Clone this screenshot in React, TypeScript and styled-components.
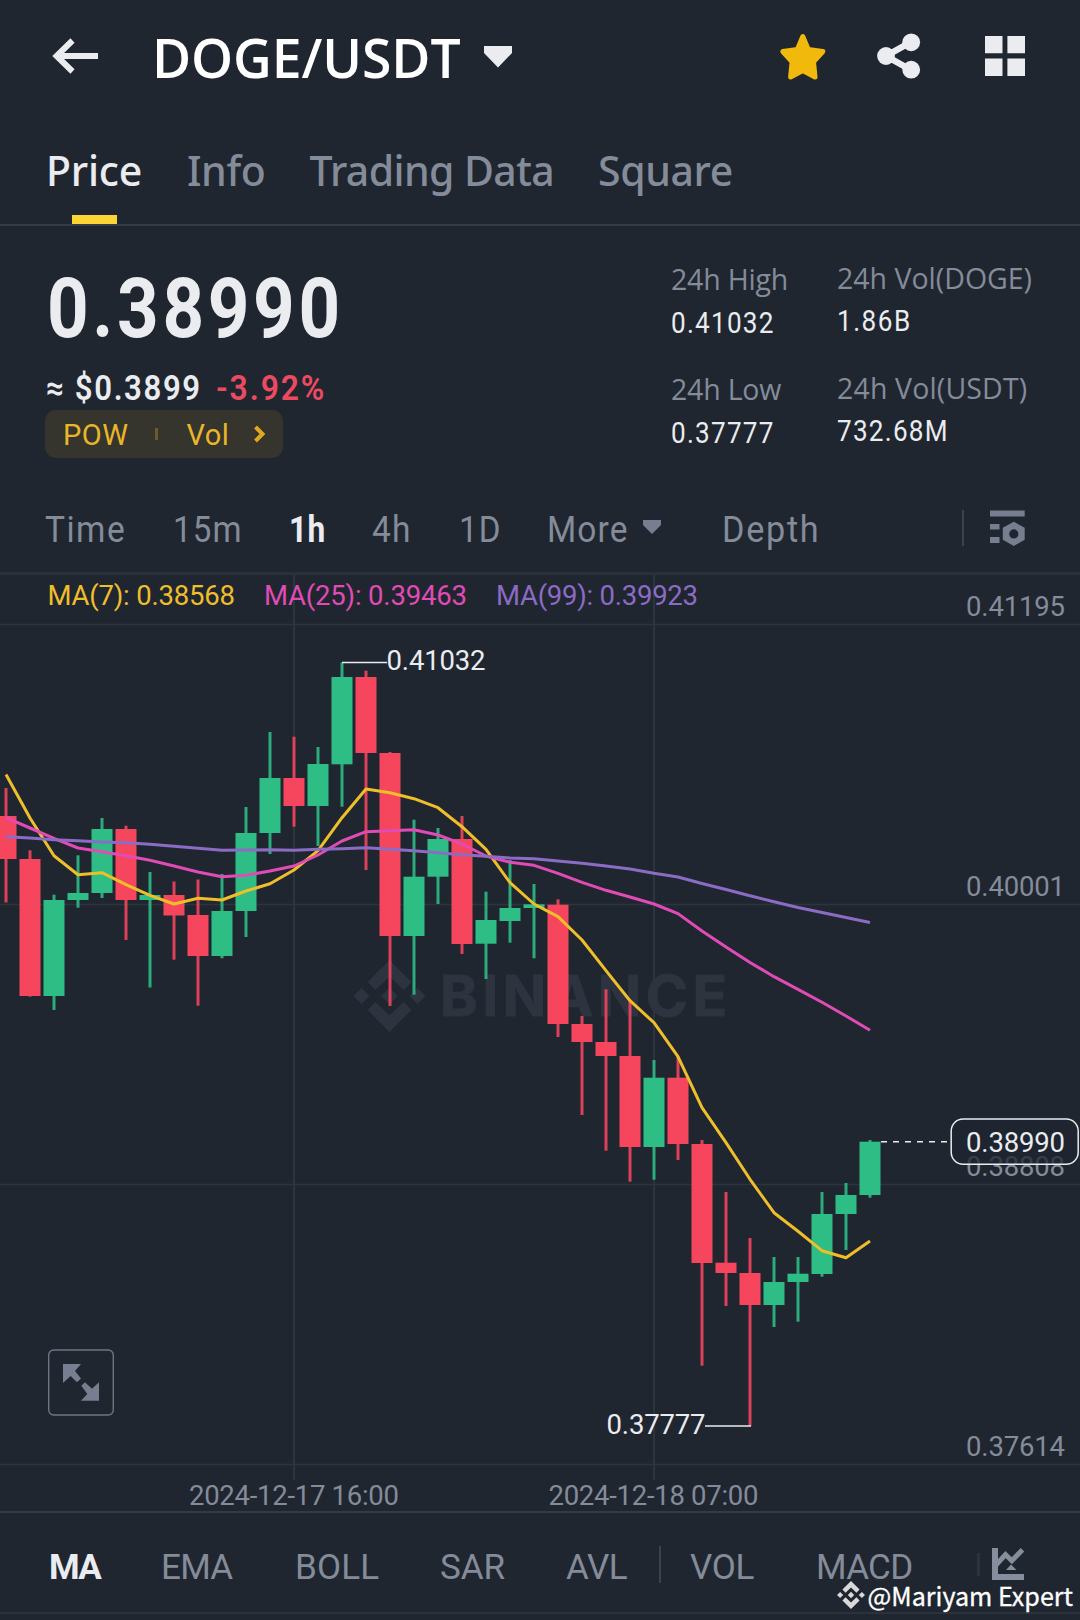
import React from "react";
import styled, { createGlobalStyle } from "styled-components";

const c = {
  bg: "#1f2630",
  line: "#333b46",
  grid: "#2c343e",
  text: "#eaecef",
  muted: "#848b99",
  icon: "#767e90",
  up: "#2ebd85",
  down: "#f6465d",
  yellow: "#f0b90b",
  ma7: "#efbe2b",
  ma25: "#e04bb5",
  ma99: "#8c6bc4",
};

const sans = `"Noto Sans", "Open Sans", sans-serif`;
const label = `"Open Sans", "Noto Sans", sans-serif`;
const din = `Roboto, "Liberation Sans", sans-serif`;

const Global = createGlobalStyle`
  body { margin: 0; background: ${c.bg}; }
  * { box-sizing: border-box; }
`;

const Screen = styled.main`
  position: relative;
  width: 1080px;
  height: 1620px;
  overflow: hidden;
  background: ${c.bg};
  color: ${c.text};
  font-family: ${din};
  white-space: nowrap;
`;

/* Narrow numerals: squeezed glyphs with looser tracking */
const Din = styled.span<{ $sx: number; $ls: number }>`
  display: inline-block;
  transform: scaleX(${(p) => p.$sx});
  transform-origin: left center;
  letter-spacing: ${(p) => p.$ls}px;
`;

const Icon = styled.svg`
  display: block;
  flex: none;
`;

const Header = styled.header`
  display: flex;
  align-items: center;
  height: 116px;
  padding: 0 52px 4px;
`;

const Pair = styled.h1`
  display: flex;
  align-items: center;
  gap: 23px;
  margin: 3px auto 0 54px;
  font: 650 53.5px/72px ${label};
  letter-spacing: -0.1px;
  color: #fff;
`;

const Actions = styled.div`
  display: flex;
  align-items: center;
`;

const Tabs = styled.nav`
  display: grid;
  grid-template-columns: 141px 122.5px 288.5px auto;
  height: 110px;
  padding-left: 46px;
  border-bottom: 2px solid ${c.line};
`;

const Tab = styled.a<{ $active?: boolean; $ls?: number }>`
  display: flex;
  flex-direction: column;
  justify-content: space-between;
  justify-self: start;
  align-items: center;
  padding-top: 24.5px;
  font: 500 41px/58px ${sans};
  letter-spacing: ${(p) => p.$ls ?? -0.4}px;
  color: ${(p) => (p.$active ? c.text : c.muted)};
`;

const TabMark = styled.i`
  width: 45px;
  height: 9px;
  background: #fcd535;
`;

const Summary = styled.section`
  display: grid;
  grid-template-columns: 625px 166px auto;
  height: 264px;
  padding-left: 46px;
`;

const Quote = styled.div`
  display: flex;
  flex-direction: column;
  align-items: flex-start;
`;

const Price = styled.strong`
  margin: 33px 0 0 1px;
  font: 700 83.5px/100px ${din};
`;

const Approx = styled.div`
  display: grid;
  grid-template-columns: 169.5px auto;
  margin-top: 7px;
  font: 600 35px/46px ${din};
`;

const Change = styled.span`
  color: #ec4a61;
`;

const Tags = styled.div`
  display: flex;
  align-items: center;
  width: 238px;
  height: 48px;
  margin: -2px 0 0 -1px;
  padding: 2px 0 0 18px;
  border-radius: 11px;
  background: #35342d;
  font: 400 29px/46px ${din};
  letter-spacing: 0.5px;
  color: #e9b62a;
`;

const TagSplit = styled.i`
  width: 3px;
  height: 12px;
  margin: -2px 28px 0 27px;
  background: #6b5a2c;
`;

const TagArrow = styled(Icon)`
  margin: -2px 0 0 25px;
`;

const Stats = styled.dl<{ $lift?: boolean }>`
  margin: ${(p) => (p.$lift ? 32.5 : 34)}px 0 0;
`;

const StatLabel = styled.dt<{ $ls?: number }>`
  font: 400 28.5px/38px ${label};
  letter-spacing: ${(p) => p.$ls ?? -0.2}px;
  color: ${c.muted};
`;

const StatValue = styled.dd`
  margin: 5.5px 0 28.5px;
  font: 400 29px/38px ${din};
`;

const Intervals = styled.nav`
  display: grid;
  grid-template-columns: 128px 116px 83px 87px 88px 175px 240px 28px auto;
  align-items: center;
  height: 85px;
  padding: 0 0 7px 45px;
  border-bottom: 3px solid #28303a;
`;

const Interval = styled.a<{ $active?: boolean }>`
  display: flex;
  align-items: center;
  gap: 8px;
  padding-top: 4px;
  font: ${(p) => (p.$active ? 700 : 400)} 36px/44px ${din};
  color: ${(p) => (p.$active ? c.text : c.muted)};
`;

const Rule = styled.i<{ $h: number }>`
  width: 2px;
  height: ${(p) => p.$h}px;
  background: #3a424e;
`;

const Chart = styled.svg`
  display: block;
  width: 1080px;
  height: 936px;
  font-family: ${din};
  font-size: 27.5px;
`;

const Indicators = styled.nav`
  display: grid;
  grid-template-columns: 112px 134px 145px 126px 93px 31px 126px 161px 15px auto;
  align-items: center;
  height: 103px;
  padding: 3px 0 0 49px;
  border-top: 2px solid ${c.line};
  border-bottom: 2px solid #2a323c;
`;

const Indicator = styled.a<{ $active?: boolean; $ls?: number }>`
  padding-top: 7px;
  font: ${(p) => (p.$active ? 700 : 400)} 35px/44px ${din};
  letter-spacing: ${(p) => p.$ls ?? -0.7}px;
  color: ${(p) => (p.$active ? c.text : c.muted)};
`;

const Fade = styled.i`
  width: 3px;
  height: 23px;
  background: #2b333e;
`;

const Credit = styled.div`
  position: absolute;
  right: 7px;
  bottom: 8px;
  display: flex;
  align-items: center;
  gap: 3px;
  font: 400 25.1px/34px "Noto Sans CJK SC", sans-serif;
  -webkit-text-stroke: 0.3px #fff;
  color: #fff;
`;

/* x = 6 + 24 * index; [up, high, bodyTop, bodyBottom, low] */
const candles: [number, number, number, number, number][] = [
  [0, 788, 816, 859, 902.5], [0, 850.3, 859, 996, 996.7], [1, 894.7, 900, 996, 1010],
  [1, 855.3, 893, 900, 907.7], [1, 818, 829, 893, 898], [0, 825.7, 829, 900, 940],
  [1, 872, 895, 900, 987.5], [0, 881.5, 895, 915.5, 959.7], [0, 879.5, 915, 956, 1005.7],
  [1, 874, 911, 956, 958.3], [1, 807, 833, 911, 937], [1, 732, 778, 833, 854],
  [0, 736.7, 778, 806, 826.7], [1, 747, 764, 806, 846], [1, 662.5, 677, 764.3, 806.7],
  [0, 670.7, 677, 753, 870], [0, 752, 753, 936, 1006], [1, 819.7, 876.7, 936, 994.7],
  [1, 828, 839, 876.7, 904], [0, 816, 839, 944, 954], [1, 891.7, 920, 943.7, 979],
  [1, 860, 908, 921, 942.7], [1, 884, 904.3, 908, 958.3], [0, 899.3, 904.7, 1024, 1037],
  [0, 1016, 1024, 1042, 1115], [0, 989.3, 1042, 1056, 1150.7], [0, 1001, 1056, 1147, 1181.7],
  [1, 1060, 1077.7, 1147, 1179.7], [0, 1057, 1077.7, 1144, 1160], [0, 1140, 1144, 1263, 1365.7],
  [0, 1192, 1262.7, 1273, 1306], [0, 1238, 1273, 1305, 1426], [1, 1257, 1282, 1305, 1327],
  [1, 1257, 1273.7, 1282, 1321.7], [1, 1192, 1214, 1274, 1276.7], [1, 1183, 1195, 1214, 1250],
  [1, 1140, 1141.7, 1195, 1197.7],
];

const ma7 = [774.5, 818, 855.7, 874.7, 872.7, 884.7, 895.3, 904, 898.3, 900, 891, 883.7, 870, 850.7, 817.7, 789, 792.7, 798.7, 807.7, 826.7, 849.3, 882.7, 904, 916.7, 940, 970.7, 1000.7, 1022.7, 1056.7, 1107.7, 1142.7, 1179.3, 1212.7, 1231.3, 1250.7, 1257.7, 1241];
const ma25 = [817.7, 828, 838.3, 848, 851.7, 855.7, 860.3, 866, 872, 876.7, 875.3, 871, 866, 855, 841, 831.7, 830.7, 829.7, 835, 844, 856, 862.3, 865.3, 873.3, 882.3, 890.3, 897, 904, 913.6, 931, 947, 962.5, 976.7, 989.3, 1002.3, 1016, 1030.3];
const ma99 = [836.7, 838, 839.7, 840.7, 842, 842.7, 844.3, 846.3, 848.3, 850.3, 850, 849.7, 850.3, 849.3, 848.7, 847.7, 849.3, 850.7, 852.7, 854.7, 856.3, 858, 858.7, 861, 863.3, 866, 869, 873.3, 877, 883.5, 889.5, 895.7, 901.8, 907.5, 912.5, 917.5, 922.5];

const toPoints = (ys: number[]) => ys.map((y, i) => `${6 + i * 24},${y}`).join(" ");

function Label(p: { x: number; y: number; w: number; fill?: string; children: string }) {
  return (
    <text x={p.x} y={p.y} textLength={p.w} fill={p.fill ?? c.muted}>
      {p.children}
    </text>
  );
}

/* Binance mark on a 72 x 72 grid */
function Mark({ fill }: { fill: string }) {
  return (
    <g fill={fill}>
      <path d="M36 0 58 22 50 30 36 16.4 22 30 14 22Z" />
      <path d="M36 72 58 50 50 42 36 55.6 22 42 14 50Z" />
      <path d="M36 27.8 44.2 36 36 44.2 27.8 36Z" />
      <path d="M8 28 16 36 8 44 0 36Z" />
      <path d="M64 28 72 36 64 44 56 36Z" />
    </g>
  );
}

function PriceChart() {
  return (
    <Chart viewBox="0 575 1080 936">
      <g stroke={c.grid} strokeWidth="1.5">
        {[624.5, 904.5, 1184.5, 1464.5].map((y) => (
          <path key={y} d={`M0 ${y}H1080`} />
        ))}
        <path d="M294 575V1480M654 575V1480" strokeWidth="2" />
      </g>
      <g transform="translate(353.5 960)">
        <Mark fill="#2e343f" />
      </g>
      <text x="440" y="1016" textLength="287" fill="#2e343f" stroke="#2e343f" strokeWidth="1" fontFamily="Inter, sans-serif" fontWeight="700" fontSize="57">
        BINANCE
      </text>
      {candles.map(([up, high, top, bottom, low], i) => {
        const x = 6 + i * 24;
        return (
          <g key={i} fill={up ? c.up : c.down}>
            <rect x={x - 1.5} y={high} width="3" height={low - high} opacity="0.88" />
            <rect x={x - 10.5} y={top} width="21" height={bottom - top} />
          </g>
        );
      })}
      <g fill="none" strokeWidth="3" strokeLinejoin="round">
        <polyline points={toPoints(ma7)} stroke={c.ma7} />
        <polyline points={toPoints(ma25)} stroke={c.ma25} />
        <polyline points={toPoints(ma99)} stroke={c.ma99} />
      </g>
      <Label x={47.5} y={605} w={187.5} fill={c.ma7}>MA(7): 0.38568</Label>
      <Label x={264} y={605} w={203} fill={c.ma25}>MA(25): 0.39463</Label>
      <Label x={496} y={605} w={202} fill={c.ma99}>MA(99): 0.39923</Label>
      <Label x={966} y={616} w={99} >0.41195</Label>
      <Label x={966} y={896} w={99}>0.40001</Label>
      <Label x={966} y={1176} w={99}>0.38808</Label>
      <Label x={966} y={1456} w={99}>0.37614</Label>
      <Label x={189} y={1505} w={210}>2024-12-17 16:00</Label>
      <Label x={548.5} y={1505} w={210}>2024-12-18 07:00</Label>
      <path d="M342 662.5H387M705 1426H751" stroke={c.text} strokeWidth="1.5" />
      <Label x={386.5} y={670} w={99} fill={c.text}>0.41032</Label>
      <Label x={606.5} y={1434} w={99} fill={c.text}>0.37777</Label>
      <path d="M881 1141.7H949" stroke={c.text} strokeWidth="1.5" strokeDasharray="6 6" />
      <rect x="951.2" y="1119" width="127" height="45.3" rx="12" fill={c.bg} fillOpacity="0.75" stroke={c.text} strokeWidth="1.5" />
      <Label x={966} y={1152} w={99} fill={c.text}>0.38990</Label>
      <rect x="48.7" y="1350" width="64.6" height="65" rx="5" fill="none" stroke="#6d7485" strokeWidth="1.4" />
      <g fill={c.icon}>
        <path d="M63 1364H81L75 1371 81 1378.5 77 1382.3 70.6 1376 63 1383Z" />
        <path d="M99 1400.7H81L87.3 1394 81.3 1385.7 85 1382.3 92 1388.7 99 1382.3Z" />
      </g>
    </Chart>
  );
}

export default function App() {
  return (
    <Screen>
      <Global />
      <Header>
        <Icon width="46" height="38" viewBox="52 37 46 38" fill="none" stroke={c.text} strokeWidth="6">
          <path d="M72.5 40.5 56.6 56 72.5 71.5M57 56H98" />
        </Icon>
        <Pair>
          DOGE/USDT
          <Icon width="28" height="24" viewBox="484 46 28 24" fill={c.text}>
            <path d="M484 46H512V53L498 67.5 484 53Z" />
          </Icon>
        </Pair>
        <Actions>
          <Icon width="50" height="50" viewBox="778 31 50 50" fill={c.yellow} stroke={c.yellow} strokeWidth="5" strokeLinejoin="round">
            <path d="M802.8 36.5 808.2 49.5 822.8 51.5 813.5 61.8 815 77 802.8 70.5 790.6 77 792.1 61.8 782.8 51.5 797.4 49.5Z" />
          </Icon>
          <Icon width="44" height="50" viewBox="877 31 44 50" fill={c.text} style={{ marginLeft: 49 }}>
            <path d="M911 42 886 56 911 70" fill="none" stroke={c.text} strokeWidth="6.5" />
            <circle cx="886" cy="56" r="8.9" />
            <circle cx="911.2" cy="42.3" r="8.9" />
            <circle cx="911.2" cy="69.7" r="8.9" />
          </Icon>
          <Icon width="44" height="50" viewBox="984 31 44 50" fill={c.text} style={{ marginLeft: 63 }}>
            <path d="M985 36H1002.5V53.3H985ZM1007.4 36H1025V53.3H1007.4ZM985 58.5H1002.5V76H985ZM1007.4 58.5H1025V76H1007.4Z" />
          </Icon>
        </Actions>
      </Header>

      <Tabs>
        <Tab $active $ls={-0.2}>Price<TabMark /></Tab>
        <Tab>Info</Tab>
        <Tab $ls={-0.6}>Trading Data</Tab>
        <Tab>Square</Tab>
      </Tabs>

      <Summary>
        <Quote>
          <Price><Din $sx={0.87} $ls={4.2}>0.38990</Din></Price>
          <Approx>
            <Din $sx={0.89} $ls={1.8}>≈ $0.3899</Din>
            <Change><Din $sx={0.91} $ls={2.1}>-3.92%</Din></Change>
          </Approx>
          <Tags>
            POW
            <TagSplit />
            Vol
            <TagArrow width="12" height="18" viewBox="0 0 12 18" fill="none" stroke="#e0a81e" strokeWidth="4">
              <path d="M1.5 2 8.5 9 1.5 16" />
            </TagArrow>
          </Tags>
        </Quote>
        <Stats>
          <StatLabel>24h High</StatLabel>
          <StatValue><Din $sx={0.9} $ls={1.4}>0.41032</Din></StatValue>
          <StatLabel>24h Low</StatLabel>
          <StatValue><Din $sx={0.9} $ls={1.4}>0.37777</Din></StatValue>
        </Stats>
        <Stats $lift>
          <StatLabel $ls={0}>24h Vol(DOGE)</StatLabel>
          <StatValue><Din $sx={0.9} $ls={1.7}>1.86B</Din></StatValue>
          <StatLabel $ls={0.15}>24h Vol(USDT)</StatLabel>
          <StatValue><Din $sx={0.9} $ls={1.4}>732.68M</Din></StatValue>
        </Stats>
      </Summary>

      <Intervals>
        <Interval><Din $sx={0.93} $ls={1.6}>Time</Din></Interval>
        <Interval><Din $sx={0.92} $ls={1.2}>15m</Din></Interval>
        <Interval $active><Din $sx={0.88} $ls={0.5}>1h</Din></Interval>
        <Interval><Din $sx={0.93} $ls={1.4}>4h</Din></Interval>
        <Interval><Din $sx={0.92} $ls={1.2}>1D</Din></Interval>
        <Interval>
          <Din $sx={0.93} $ls={1.2}>More</Din>
          <Icon width="18" height="20" viewBox="0 0 18 20" fill={c.icon}>
            <path d="M0 0H18V5L9 14 0 5Z" />
          </Icon>
        </Interval>
        <Interval><Din $sx={0.95} $ls={1.8}>Depth</Din></Interval>
        <Rule $h={36} />
        <Icon width="36" height="38" viewBox="991 509 36 38" fill={c.icon}>
          <path d="M991 510.5H1025.7V516.5H991ZM991 524H1000.5V529.5H991ZM991 537H1000.5V543H991Z" />
          <path fillRule="evenodd" d="M1014.8 521.7 1025.7 527.8V539.8L1014.8 546 1003.8 539.8V527.8ZM1014.8 529.3A4.6 4.6 0 1 0 1014.8 538.5 4.6 4.6 0 1 0 1014.8 529.3Z" />
        </Icon>
      </Intervals>

      <PriceChart />

      <Indicators>
        <Indicator $active $ls={-1.6}>MA</Indicator>
        <Indicator>EMA</Indicator>
        <Indicator $ls={0.2}>BOLL</Indicator>
        <Indicator $ls={-0.1}>SAR</Indicator>
        <Indicator $ls={-0.4}>AVL</Indicator>
        <Rule $h={37} />
        <Indicator $ls={-0.3}>VOL</Indicator>
        <Indicator>MACD</Indicator>
        <Fade />
        <Icon width="34" height="36" viewBox="992 1546 34 36" fill="#848e9c">
          <path d="M992 1548H998V1574H1024V1580H992Z" />
          <path d="M996 1565 1005.5 1554.5 1011.8 1560.7 1022.5 1549.8" fill="none" stroke="#848e9c" strokeWidth="5" />
          <path d="M1011 1564.5 1016.5 1570H1006Z" />
        </Icon>
      </Indicators>

      <Credit>
        <Icon width="28" height="28" viewBox="0 0 72 72">
          <Mark fill="#d9d9d9" />
        </Icon>
        @Mariyam Expert
      </Credit>
    </Screen>
  );
}
